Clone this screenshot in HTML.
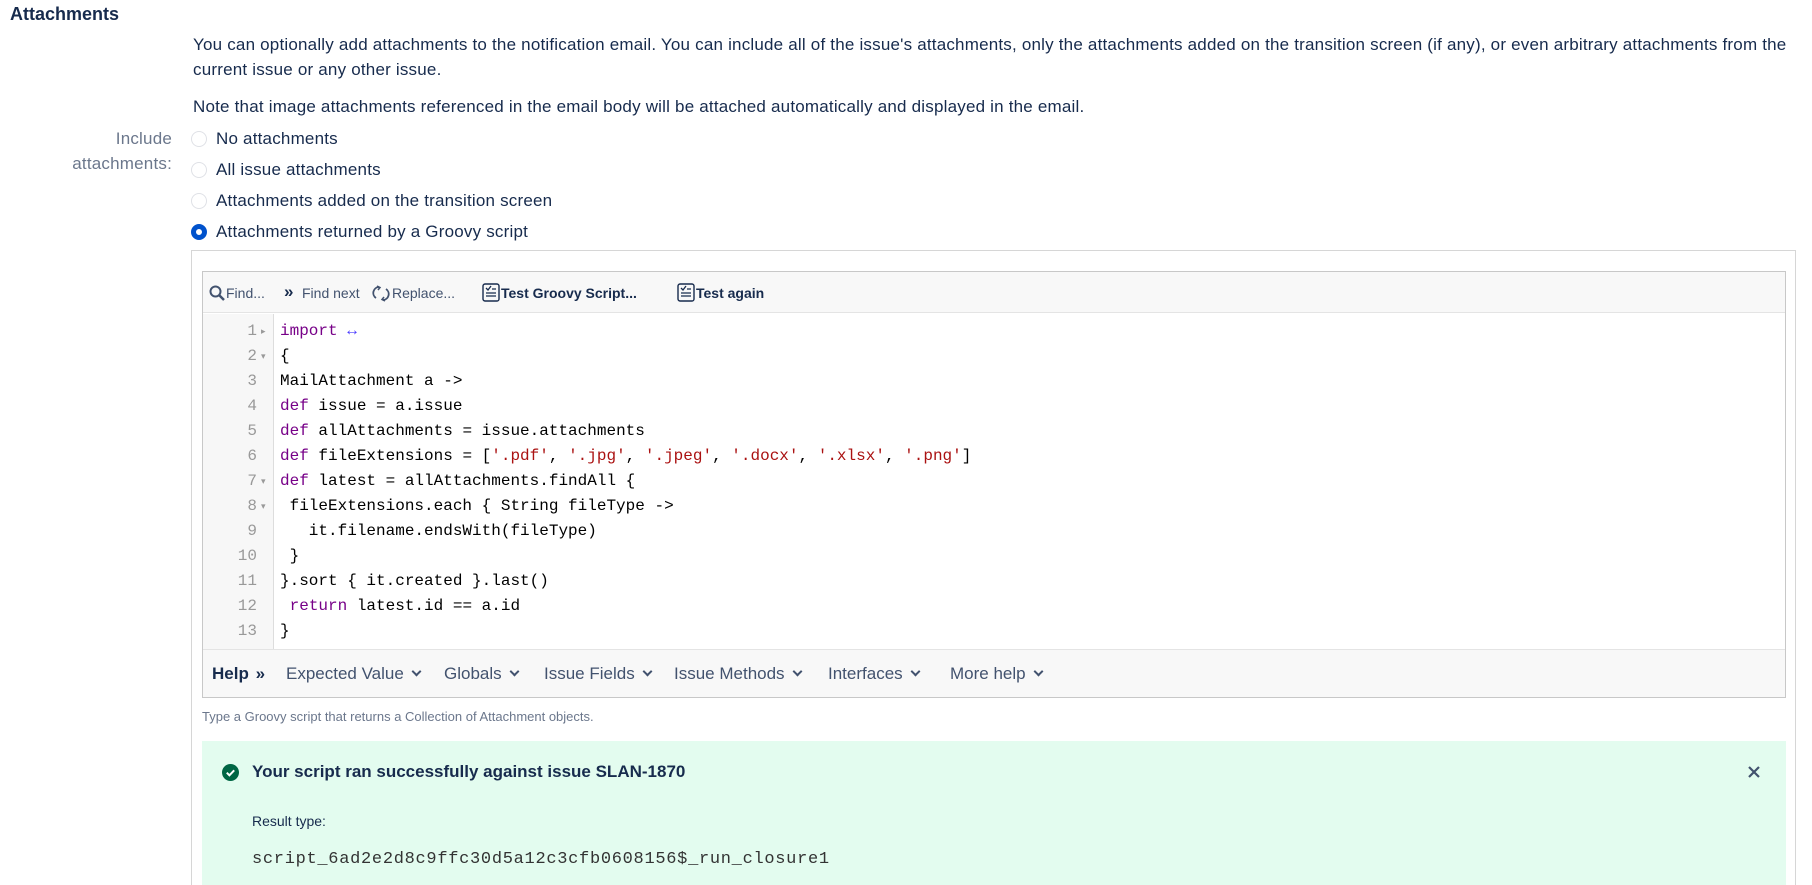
<!DOCTYPE html>
<html style="width:1812px;height:885px;overflow:hidden"><head><meta charset="utf-8"><style>
*{margin:0;padding:0;box-sizing:border-box}
body{width:1812px;height:885px;overflow:hidden;background:#fff;font-family:"Liberation Sans",sans-serif;color:#172b4d;position:relative}
.a{position:absolute;white-space:nowrap}
.t{font-size:17px;line-height:20px;letter-spacing:.2px}
.lbl{color:#6b778c;font-size:17px;text-align:right;width:160px;letter-spacing:.2px}
.radio{position:absolute;width:16px;height:16px;border:1.5px solid #dfe1e6;border-radius:50%;background:#fff}
.mono{font-family:"Liberation Mono",monospace;font-size:16px;letter-spacing:0}
.ln{position:absolute;left:0;width:54px;text-align:right;color:#999;font-family:"Liberation Mono",monospace;font-size:16px}
.fold{position:absolute;left:58px;color:#999;font-size:9px}
.code{position:absolute;left:77px;color:#000;white-space:pre}
.k{color:#770088}.s{color:#aa1111}
.tb{font-size:14px;color:#42526e}
.hb{font-size:17px;color:#42526e}
.chev{display:inline-block;width:7px;height:7px;border-right:2px solid #42526e;border-bottom:2px solid #42526e;transform:rotate(45deg);margin-left:9px;position:relative;top:-4px}
</style></head><body>
<div class="a" style="left:10px;top:4px;font-size:18px;font-weight:bold">Attachments</div>
<div class="a t" style="left:193px;top:35px">You can optionally add attachments to the notification email. You can include all of the issue's attachments, only the attachments added on the transition screen (if any), or even arbitrary attachments from the</div>
<div class="a t" style="left:193px;top:60px">current issue or any other issue.</div>
<div class="a t" style="left:193px;top:97px">Note that image attachments referenced in the email body will be attached automatically and displayed in the email.</div>
<div class="a lbl" style="left:12px;top:129px">Include</div>
<div class="a lbl" style="left:12px;top:154px">attachments:</div>
<div class="radio" style="left:191px;top:131px"></div>
<div class="a t" style="left:216px;top:129px">No attachments</div>
<div class="radio" style="left:191px;top:162px"></div>
<div class="a t" style="left:216px;top:160px">All issue attachments</div>
<div class="radio" style="left:191px;top:193px"></div>
<div class="a t" style="left:216px;top:191px">Attachments added on the transition screen</div>
<div class="radio" style="left:191px;top:224px;border:5px solid #0052cc"></div>
<div class="a t" style="left:216px;top:222px">Attachments returned by a Groovy script</div>

<div class="a" style="left:191px;top:250px;width:1605px;height:635px;border:1px solid #d6d6d6;border-bottom:none;background:#fff"></div>
<div class="a" style="left:202px;top:271px;width:1584px;height:427px;border:1px solid #c8c8c8;background:#fff">
 <div class="a" style="left:0;top:0;width:1582px;height:41px;background:#f8f8f8;border-bottom:1px solid #e4e4e4"></div>
 <svg class="a" style="left:6px;top:13px" width="16" height="16" viewBox="0 0 16 16"><circle cx="6.5" cy="6.5" r="5" fill="none" stroke="#42526e" stroke-width="2"/><path d="M10 10l5 5" stroke="#42526e" stroke-width="2.5"/></svg>
 <div class="a tb" style="left:23px;top:13px">Find...</div>
 <div class="a" style="left:81px;top:10px;font-size:17px;font-weight:bold;color:#172b4d">»</div>
 <div class="a tb" style="left:99px;top:13px">Find next</div>
 <svg class="a" style="left:169px;top:13px" width="18" height="17" viewBox="0 0 18 17"><path d="M7 2A6 6 0 0 0 4 13M11 15A6 6 0 0 0 14 4" fill="none" stroke="#42526e" stroke-width="1.8"/><path d="M5 1l3 1.5-2 2.5M13 16l-3-1.5 2-2.5" fill="none" stroke="#42526e" stroke-width="1.5"/></svg>
 <div class="a tb" style="left:189px;top:13px">Replace...</div>
 <svg class="a" style="left:279px;top:11px" width="18" height="19" viewBox="0 0 18 19"><rect x="1" y="1" width="16" height="17" rx="2" fill="none" stroke="#172b4d" stroke-width="1.4"/><path d="M4 5l2 2 3-4M4 10h10M4 13h10M10 6h4" fill="none" stroke="#172b4d" stroke-width="1.3"/></svg>
 <div class="a tb" style="left:298px;top:13px;font-weight:bold;color:#172b4d">Test Groovy Script...</div>
 <svg class="a" style="left:474px;top:11px" width="18" height="19" viewBox="0 0 18 19"><rect x="1" y="1" width="16" height="17" rx="2" fill="none" stroke="#172b4d" stroke-width="1.4"/><path d="M4 5l2 2 3-4M4 10h10M4 13h10M10 6h4" fill="none" stroke="#172b4d" stroke-width="1.3"/></svg>
 <div class="a tb" style="left:493px;top:13px;font-weight:bold;color:#172b4d">Test again</div>
 <div class="a" style="left:0;top:42px;width:71px;height:335px;background:#f7f7f7;border-right:1px solid #ddd"></div>
 <div class="a" style="left:0;top:47px;width:1582px;height:330px;line-height:25px">
  <div class="ln" style="top:0">1</div><div class="fold" style="top:0">▸</div><div class="code mono" style="top:0"><span class="k">import</span> <span style="color:#4b3cff">↔</span></div>
  <div class="ln" style="top:25px">2</div><div class="fold" style="top:25px">▾</div><div class="code mono" style="top:25px">{</div>
  <div class="ln" style="top:50px">3</div><div class="code mono" style="top:50px">MailAttachment a -&gt;</div>
  <div class="ln" style="top:75px">4</div><div class="code mono" style="top:75px"><span class="k">def</span> issue = a.issue</div>
  <div class="ln" style="top:100px">5</div><div class="code mono" style="top:100px"><span class="k">def</span> allAttachments = issue.attachments</div>
  <div class="ln" style="top:125px">6</div><div class="code mono" style="top:125px"><span class="k">def</span> fileExtensions = [<span class="s">'.pdf'</span>, <span class="s">'.jpg'</span>, <span class="s">'.jpeg'</span>, <span class="s">'.docx'</span>, <span class="s">'.xlsx'</span>, <span class="s">'.png'</span>]</div>
  <div class="ln" style="top:150px">7</div><div class="fold" style="top:150px">▾</div><div class="code mono" style="top:150px"><span class="k">def</span> latest = allAttachments.findAll {</div>
  <div class="ln" style="top:175px">8</div><div class="fold" style="top:175px">▾</div><div class="code mono" style="top:175px"> fileExtensions.each { String fileType -&gt;</div>
  <div class="ln" style="top:200px">9</div><div class="code mono" style="top:200px">   it.filename.endsWith(fileType)</div>
  <div class="ln" style="top:225px">10</div><div class="code mono" style="top:225px"> }</div>
  <div class="ln" style="top:250px">11</div><div class="code mono" style="top:250px">}.sort { it.created }.last()</div>
  <div class="ln" style="top:275px">12</div><div class="code mono" style="top:275px"> <span class="k">return</span> latest.id == a.id</div>
  <div class="ln" style="top:300px">13</div><div class="code mono" style="top:300px">}</div>
 </div>
 <div class="a" style="left:0;top:377px;width:1582px;height:48px;background:#f8f8f8;border-top:1px solid #e4e4e4"></div>
 <div class="a hb" style="left:9px;top:392px;font-weight:bold;color:#172b4d">Help <span style="margin-left:2px">»</span></div>
 <div class="a hb" style="left:83px;top:392px">Expected Value<span class="chev"></span></div>
 <div class="a hb" style="left:241px;top:392px">Globals<span class="chev"></span></div>
 <div class="a hb" style="left:341px;top:392px">Issue Fields<span class="chev"></span></div>
 <div class="a hb" style="left:471px;top:392px">Issue Methods<span class="chev"></span></div>
 <div class="a hb" style="left:625px;top:392px">Interfaces<span class="chev"></span></div>
 <div class="a hb" style="left:747px;top:392px">More help<span class="chev"></span></div>
</div>
<div class="a" style="left:202px;top:709px;font-size:13px;color:#6b778c">Type a Groovy script that returns a Collection of Attachment objects.</div>
<div class="a" style="left:202px;top:741px;width:1584px;height:144px;background:#e3fcef"></div>
<svg class="a" style="left:222px;top:764px" width="17" height="17" viewBox="0 0 17 17"><circle cx="8.5" cy="8.5" r="8.5" fill="#006644"/><path d="M4.8 8.7l2.6 2.6 4.8-5" fill="none" stroke="#fff" stroke-width="2"/></svg>
<div class="a" style="left:252px;top:762px;font-size:17px;font-weight:bold;color:#172b4d">Your script ran successfully against issue SLAN-1870</div>
<svg class="a" style="left:1747px;top:765px" width="14" height="14" viewBox="0 0 14 14"><path d="M2 2l10 10M12 2L2 12" stroke="#42526e" stroke-width="2.2"/></svg>
<div class="a" style="left:252px;top:813px;font-size:14px;color:#172b4d">Result type:</div>
<div class="a" style="left:252px;top:850px;font-family:'Liberation Mono',monospace;font-size:17px;letter-spacing:.7px;color:#333">script_6ad2e2d8c9ffc30d5a12c3cfb0608156$_run_closure1</div>
</body></html>
